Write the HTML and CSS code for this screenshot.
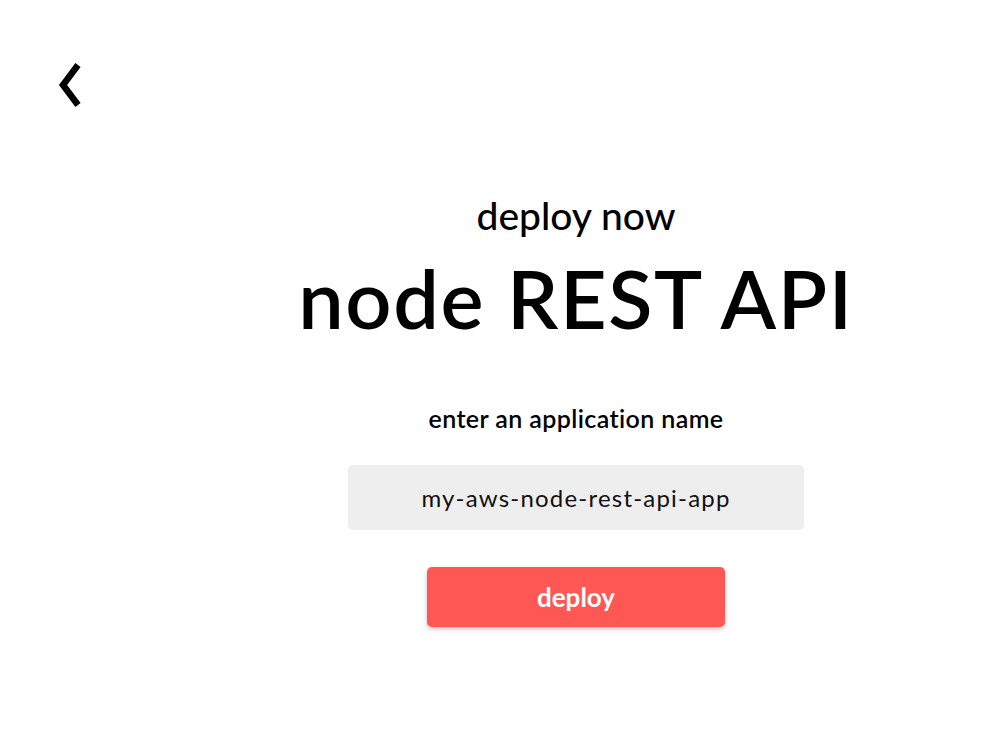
FILE: index.html
```html
<!DOCTYPE html>
<html lang="en">
<head>
<meta charset="utf-8">
<title>deploy now</title>
<link rel="stylesheet" href="styles.css">
</head>
<body>
<div class="page">
  <aside class="nav">
    <a class="back" href="#" aria-label="back">
      <svg width="30" height="50" viewBox="0 0 30 50">
        <polyline points="23,5 8,25 23,45" fill="none" stroke="#000" stroke-width="6.5" stroke-linejoin="miter" stroke-linecap="butt"/>
      </svg>
    </a>
  </aside>
  <main class="content">
    <h2 class="kicker">deploy now</h2>
    <h1 class="title">node REST API</h1>
    <label class="label" for="app-name">enter an application name</label>
    <input class="field" id="app-name" type="text" value="my-aws-node-rest-api-app">
    <button class="deploy" type="button">deploy</button>
  </main>
</div>
</body>
</html>
```
FILE: styles.css
```css
* { box-sizing: border-box; }

html, body {
  margin: 0;
  background: #fff;
}

body {
  font-family: Lato, "Noto Sans", sans-serif;
  color: #000;
}

.page {
  display: flex;
  min-height: 750px;
}

.nav {
  width: 152px;
  flex: none;
  padding: 60px 0 0 55px;
}

.back {
  display: block;
  width: 30px;
  height: 50px;
}

.back svg { display: block; }

.content {
  flex: 1;
  display: flex;
  flex-direction: column;
  align-items: center;
  padding-top: 190px;
}

.kicker {
  margin: 0;
  font-size: 39px;
  font-weight: 500;
  line-height: 50px;
}

.title {
  margin: 8px 0 0;
  font-size: 81px;
  font-weight: 600;
  line-height: 100px;
  letter-spacing: 1.6px;
}

.label {
  margin-top: 55px;
  font-size: 25px;
  font-weight: 600;
  line-height: 30px;
  letter-spacing: 0.4px;
}

.field {
  margin-top: 32px;
  width: 456px;
  height: 65px;
  border: none;
  border-radius: 5px;
  background: #eeeeee;
  text-align: center;
  font-family: inherit;
  font-size: 24px;
  letter-spacing: 1.2px;
  color: #111;
  outline: none;
}

.deploy {
  margin-top: 37px;
  width: 298px;
  height: 60px;
  border: none;
  border-radius: 5px;
  background: #ff5753;
  color: #fff;
  font-family: inherit;
  font-size: 26px;
  font-weight: 700;
  box-shadow: 0 2px 4px rgba(0, 0, 0, 0.25);
  cursor: pointer;
}
```
